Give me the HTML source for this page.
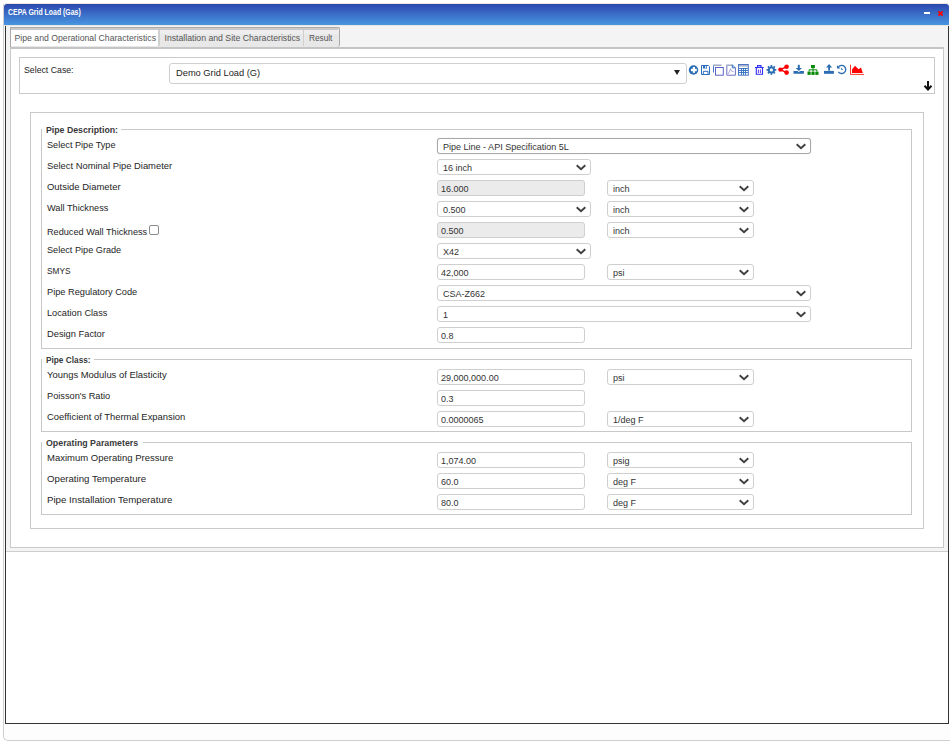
<!DOCTYPE html>
<html><head><meta charset="utf-8"><style>
html,body{margin:0;padding:0;width:952px;height:747px;overflow:hidden;background:#fff;position:relative}
body div{position:absolute;box-sizing:content-box}
.t{white-space:pre;font-family:"Liberation Sans", sans-serif}
</style></head><body>
<div style="left:3px;top:4px;width:946px;height:736px;border-left:1px solid #cfcfcf;border-bottom:1px solid #cfcfcf;border-bottom-left-radius:5px;background:#fdfdfd"></div>
<div style="left:5px;top:3px;width:943px;height:1px;background:#ebe7df"></div>
<div style="left:4px;top:4px;width:945px;height:21px;background:linear-gradient(#2d47ad,#4896e2);border-radius:3px 3px 0 0"></div>
<div class="t" style="left:7.5px;top:8.38px;font-size:9px;line-height:9px;font-weight:bold;color:#fff;transform:scaleX(0.770);transform-origin:0 0;">CEPA Grid Load (Gas)</div>
<div style="left:924px;top:12px;width:6px;height:2px;background:#fff"></div>
<svg style="position:absolute;left:937px;top:10px" width="7" height="7" viewBox="0 0 7 7"><path d="M1.4 1.4L5.6 5.6M5.6 1.4L1.4 5.6" stroke="#f00" stroke-width="1.7"/></svg>
<div style="left:5px;top:26px;width:942px;height:697px;border:1px solid #333;border-top:none;background:#f4f4f4"></div>
<div style="left:6px;top:552px;width:942px;height:171px;background:#fff"></div>
<div style="left:6px;top:551px;width:942px;height:1px;background:#cdcdcd"></div>
<div style="left:4px;top:25px;width:945px;height:1px;background:#e9e6e0"></div>
<div style="left:10px;top:27px;width:328px;height:19px;border:1px solid #a9a9a9;border-bottom:none;border-radius:0 2px 3px 0;background:linear-gradient(#eeeeee 0,#eeeeee 30%,#e8e8e8 30%,#e8e8e8 100%)"></div>
<div style="left:11px;top:28px;width:327px;height:2px;background:#c9c9c9"></div>
<div style="left:11px;top:30px;width:147px;height:16px;background:#fff"></div>
<div style="left:158px;top:30px;width:2px;height:16px;background:#cfcfcf"></div>
<div style="left:303px;top:30px;width:1px;height:16px;background:#cfcfcf"></div>
<div class="t" style="left:14.5px;top:33.64px;font-size:8.7px;line-height:8.7px;font-weight:normal;color:#555;">Pipe and Operational Characteristics</div>
<div class="t" style="left:164.5px;top:33.64px;font-size:8.7px;line-height:8.7px;font-weight:normal;color:#555;">Installation and Site Characteristics</div>
<div class="t" style="left:309px;top:33.64px;font-size:8.7px;line-height:8.7px;font-weight:normal;color:#555;transform:scaleX(0.950);transform-origin:0 0;">Result</div>
<div style="left:10px;top:47px;width:932px;height:499px;border:1px solid #c9c9c9;background:#fff"></div>
<div style="left:11px;top:47px;width:932px;height:2px;background:#c4c4c4"></div>
<div style="left:19px;top:57px;width:914px;height:35px;border:1px solid #cacaca"></div>
<div class="t" style="left:23.5px;top:65.46px;font-size:9.5px;line-height:9.5px;font-weight:normal;color:#252525;transform:scaleX(0.920);transform-origin:0 0;">Select Case:</div>
<div style="left:169px;top:63px;width:516px;height:19px;border:1px solid #cfcfcf;border-radius:3px;background:#fff"></div>
<div class="t" style="left:175.5px;top:67.96px;font-size:9.5px;line-height:9.5px;font-weight:normal;color:#252525;transform:scaleX(0.978);transform-origin:0 0;">Demo Grid Load (G)</div>
<svg style="position:absolute;left:674px;top:70px" width="7" height="5" viewBox="0 0 7 5"><path d="M0 0H6L3 5Z" fill="#222"/></svg>
<svg style="position:absolute;left:923px;top:81px" width="10" height="10" viewBox="0 0 10 10"><path d="M5 0V8M1.5 4.8L5 8.5L8.5 4.8" stroke="#111" stroke-width="2" fill="none"/></svg>
<div style="left:30px;top:112px;width:892px;height:415px;border:1px solid #cacaca"></div>
<div style="left:41px;top:129px;width:869px;height:219px;border:1px solid #c8c8c8;border-top:none"></div>
<div style="left:121px;top:129px;width:790px;height:1px;background:#c8c8c8"></div>
<div class="t" style="left:45.5px;top:125.80px;font-size:8.5px;line-height:8.5px;font-weight:bold;color:#3a3a3a;transform:scaleX(1.030);transform-origin:0 0;">Pipe Description:</div>
<div style="left:41px;top:359px;width:869px;height:72px;border:1px solid #c8c8c8;border-top:none"></div>
<div style="left:94px;top:359px;width:817px;height:1px;background:#c8c8c8"></div>
<div class="t" style="left:45.5px;top:355.80px;font-size:8.5px;line-height:8.5px;font-weight:bold;color:#3a3a3a;transform:scaleX(0.973);transform-origin:0 0;">Pipe Class:</div>
<div style="left:41px;top:442px;width:869px;height:72px;border:1px solid #c8c8c8;border-top:none"></div>
<div style="left:143px;top:442px;width:768px;height:1px;background:#c8c8c8"></div>
<div class="t" style="left:45.5px;top:438.80px;font-size:8.5px;line-height:8.5px;font-weight:bold;color:#3a3a3a;transform:scaleX(1.038);transform-origin:0 0;">Operating Parameters</div>
<div class="t" style="left:47px;top:139.96px;font-size:9.5px;line-height:9.5px;font-weight:normal;color:#252525;transform:scaleX(0.963);transform-origin:0 0;">Select Pipe Type</div>
<div style="left:437px;top:138px;width:372px;height:14px;border:1px solid #a8a8a8;border-radius:3px;background:#fff;box-shadow:0 0 1px rgba(0,0,0,.25);"><div class="t" style="left:5px;top:2.87px;font-size:9.6px;line-height:9.6px;color:#333;transform:scaleX(.94);transform-origin:0 0">Pipe Line - API Specification 5L</div><svg style="position:absolute;right:4px;top:4px" width="10" height="7" viewBox="0 0 10 7"><path d="M0.7 1.2L5 5.3L9.3 1.2" stroke="#404040" stroke-width="1.9" fill="none"/></svg></div>
<div class="t" style="left:47px;top:161.46px;font-size:9.5px;line-height:9.5px;font-weight:normal;color:#252525;transform:scaleX(0.987);transform-origin:0 0;">Select Nominal Pipe Diameter</div>
<div style="left:437px;top:159px;width:152px;height:14px;border:1px solid #cfcfcf;border-radius:3px;background:#fff;"><div class="t" style="left:5px;top:2.87px;font-size:9.6px;line-height:9.6px;color:#333;transform:scaleX(.94);transform-origin:0 0">16 inch</div><svg style="position:absolute;right:4px;top:4px" width="10" height="7" viewBox="0 0 10 7"><path d="M0.7 1.2L5 5.3L9.3 1.2" stroke="#404040" stroke-width="1.9" fill="none"/></svg></div>
<div class="t" style="left:47px;top:182.46px;font-size:9.5px;line-height:9.5px;font-weight:normal;color:#252525;transform:scaleX(0.995);transform-origin:0 0;">Outside Diameter</div>
<div style="left:437px;top:180px;width:146px;height:14px;border:1px solid #cfcfcf;border-radius:3px;background:#ebebeb"><div class="t" style="left:3px;top:2.87px;font-size:9.6px;line-height:9.6px;color:#333;transform:scaleX(.94);transform-origin:0 0">16.000</div></div>
<div style="left:607px;top:180px;width:145px;height:14px;border:1px solid #cfcfcf;border-radius:3px;background:#fff;"><div class="t" style="left:5px;top:2.87px;font-size:9.6px;line-height:9.6px;color:#333;transform:scaleX(.94);transform-origin:0 0">inch</div><svg style="position:absolute;right:4px;top:4px" width="10" height="7" viewBox="0 0 10 7"><path d="M0.7 1.2L5 5.3L9.3 1.2" stroke="#404040" stroke-width="1.9" fill="none"/></svg></div>
<div class="t" style="left:47px;top:202.96px;font-size:9.5px;line-height:9.5px;font-weight:normal;color:#252525;transform:scaleX(0.968);transform-origin:0 0;">Wall Thickness</div>
<div style="left:437px;top:201px;width:152px;height:14px;border:1px solid #cfcfcf;border-radius:3px;background:#fff;"><div class="t" style="left:5px;top:2.87px;font-size:9.6px;line-height:9.6px;color:#333;transform:scaleX(.94);transform-origin:0 0">0.500</div><svg style="position:absolute;right:4px;top:4px" width="10" height="7" viewBox="0 0 10 7"><path d="M0.7 1.2L5 5.3L9.3 1.2" stroke="#404040" stroke-width="1.9" fill="none"/></svg></div>
<div style="left:607px;top:201px;width:145px;height:14px;border:1px solid #cfcfcf;border-radius:3px;background:#fff;"><div class="t" style="left:5px;top:2.87px;font-size:9.6px;line-height:9.6px;color:#333;transform:scaleX(.94);transform-origin:0 0">inch</div><svg style="position:absolute;right:4px;top:4px" width="10" height="7" viewBox="0 0 10 7"><path d="M0.7 1.2L5 5.3L9.3 1.2" stroke="#404040" stroke-width="1.9" fill="none"/></svg></div>
<div class="t" style="left:47px;top:226.96px;font-size:9.5px;line-height:9.5px;font-weight:normal;color:#252525;transform:scaleX(0.963);transform-origin:0 0;">Reduced Wall Thickness</div>
<div style="left:437px;top:222px;width:146px;height:14px;border:1px solid #cfcfcf;border-radius:3px;background:#ebebeb"><div class="t" style="left:3px;top:2.87px;font-size:9.6px;line-height:9.6px;color:#333;transform:scaleX(.94);transform-origin:0 0">0.500</div></div>
<div style="left:607px;top:222px;width:145px;height:14px;border:1px solid #cfcfcf;border-radius:3px;background:#fff;"><div class="t" style="left:5px;top:2.87px;font-size:9.6px;line-height:9.6px;color:#333;transform:scaleX(.94);transform-origin:0 0">inch</div><svg style="position:absolute;right:4px;top:4px" width="10" height="7" viewBox="0 0 10 7"><path d="M0.7 1.2L5 5.3L9.3 1.2" stroke="#404040" stroke-width="1.9" fill="none"/></svg></div>
<div class="t" style="left:47px;top:244.96px;font-size:9.5px;line-height:9.5px;font-weight:normal;color:#252525;transform:scaleX(0.962);transform-origin:0 0;">Select Pipe Grade</div>
<div style="left:437px;top:243px;width:152px;height:14px;border:1px solid #cfcfcf;border-radius:3px;background:#fff;"><div class="t" style="left:5px;top:2.87px;font-size:9.6px;line-height:9.6px;color:#333;transform:scaleX(.94);transform-origin:0 0">X42</div><svg style="position:absolute;right:4px;top:4px" width="10" height="7" viewBox="0 0 10 7"><path d="M0.7 1.2L5 5.3L9.3 1.2" stroke="#404040" stroke-width="1.9" fill="none"/></svg></div>
<div class="t" style="left:47px;top:265.96px;font-size:9.5px;line-height:9.5px;font-weight:normal;color:#252525;transform:scaleX(0.869);transform-origin:0 0;">SMYS</div>
<div style="left:437px;top:264px;width:146px;height:14px;border:1px solid #cfcfcf;border-radius:3px;background:#fff"><div class="t" style="left:3px;top:2.87px;font-size:9.6px;line-height:9.6px;color:#333;transform:scaleX(.94);transform-origin:0 0">42,000</div></div>
<div style="left:607px;top:264px;width:145px;height:14px;border:1px solid #cfcfcf;border-radius:3px;background:#fff;"><div class="t" style="left:5px;top:2.87px;font-size:9.6px;line-height:9.6px;color:#333;transform:scaleX(.94);transform-origin:0 0">psi</div><svg style="position:absolute;right:4px;top:4px" width="10" height="7" viewBox="0 0 10 7"><path d="M0.7 1.2L5 5.3L9.3 1.2" stroke="#404040" stroke-width="1.9" fill="none"/></svg></div>
<div class="t" style="left:47px;top:286.96px;font-size:9.5px;line-height:9.5px;font-weight:normal;color:#252525;transform:scaleX(0.971);transform-origin:0 0;">Pipe Regulatory Code</div>
<div style="left:437px;top:285px;width:372px;height:14px;border:1px solid #cfcfcf;border-radius:3px;background:#fff;"><div class="t" style="left:5px;top:2.87px;font-size:9.6px;line-height:9.6px;color:#333;transform:scaleX(.94);transform-origin:0 0">CSA-Z662</div><svg style="position:absolute;right:4px;top:4px" width="10" height="7" viewBox="0 0 10 7"><path d="M0.7 1.2L5 5.3L9.3 1.2" stroke="#404040" stroke-width="1.9" fill="none"/></svg></div>
<div class="t" style="left:47px;top:307.96px;font-size:9.5px;line-height:9.5px;font-weight:normal;color:#252525;transform:scaleX(0.970);transform-origin:0 0;">Location Class</div>
<div style="left:437px;top:306px;width:372px;height:14px;border:1px solid #cfcfcf;border-radius:3px;background:#fff;"><div class="t" style="left:5px;top:2.87px;font-size:9.6px;line-height:9.6px;color:#333;transform:scaleX(.94);transform-origin:0 0">1</div><svg style="position:absolute;right:4px;top:4px" width="10" height="7" viewBox="0 0 10 7"><path d="M0.7 1.2L5 5.3L9.3 1.2" stroke="#404040" stroke-width="1.9" fill="none"/></svg></div>
<div class="t" style="left:47px;top:328.96px;font-size:9.5px;line-height:9.5px;font-weight:normal;color:#252525;transform:scaleX(0.979);transform-origin:0 0;">Design Factor</div>
<div style="left:437px;top:327px;width:146px;height:14px;border:1px solid #cfcfcf;border-radius:3px;background:#fff"><div class="t" style="left:3px;top:2.87px;font-size:9.6px;line-height:9.6px;color:#333;transform:scaleX(.94);transform-origin:0 0">0.8</div></div>
<div class="t" style="left:47px;top:369.96px;font-size:9.5px;line-height:9.5px;font-weight:normal;color:#252525;transform:scaleX(0.992);transform-origin:0 0;">Youngs Modulus of Elasticity</div>
<div style="left:437px;top:369px;width:146px;height:14px;border:1px solid #cfcfcf;border-radius:3px;background:#fff"><div class="t" style="left:3px;top:2.87px;font-size:9.6px;line-height:9.6px;color:#333;transform:scaleX(.94);transform-origin:0 0">29,000,000.00</div></div>
<div style="left:607px;top:369px;width:145px;height:14px;border:1px solid #cfcfcf;border-radius:3px;background:#fff;"><div class="t" style="left:5px;top:2.87px;font-size:9.6px;line-height:9.6px;color:#333;transform:scaleX(.94);transform-origin:0 0">psi</div><svg style="position:absolute;right:4px;top:4px" width="10" height="7" viewBox="0 0 10 7"><path d="M0.7 1.2L5 5.3L9.3 1.2" stroke="#404040" stroke-width="1.9" fill="none"/></svg></div>
<div class="t" style="left:47px;top:390.96px;font-size:9.5px;line-height:9.5px;font-weight:normal;color:#252525;transform:scaleX(0.970);transform-origin:0 0;">Poisson's Ratio</div>
<div style="left:437px;top:390px;width:146px;height:14px;border:1px solid #cfcfcf;border-radius:3px;background:#fff"><div class="t" style="left:3px;top:2.87px;font-size:9.6px;line-height:9.6px;color:#333;transform:scaleX(.94);transform-origin:0 0">0.3</div></div>
<div class="t" style="left:47px;top:411.96px;font-size:9.5px;line-height:9.5px;font-weight:normal;color:#252525;transform:scaleX(0.991);transform-origin:0 0;">Coefficient of Thermal Expansion</div>
<div style="left:437px;top:411px;width:146px;height:14px;border:1px solid #cfcfcf;border-radius:3px;background:#fff"><div class="t" style="left:3px;top:2.87px;font-size:9.6px;line-height:9.6px;color:#333;transform:scaleX(.94);transform-origin:0 0">0.0000065</div></div>
<div style="left:607px;top:411px;width:145px;height:14px;border:1px solid #cfcfcf;border-radius:3px;background:#fff;"><div class="t" style="left:5px;top:2.87px;font-size:9.6px;line-height:9.6px;color:#333;transform:scaleX(.94);transform-origin:0 0">1/deg F</div><svg style="position:absolute;right:4px;top:4px" width="10" height="7" viewBox="0 0 10 7"><path d="M0.7 1.2L5 5.3L9.3 1.2" stroke="#404040" stroke-width="1.9" fill="none"/></svg></div>
<div class="t" style="left:47px;top:452.96px;font-size:9.5px;line-height:9.5px;font-weight:normal;color:#252525;">Maximum Operating Pressure</div>
<div style="left:437px;top:452px;width:146px;height:14px;border:1px solid #cfcfcf;border-radius:3px;background:#fff"><div class="t" style="left:3px;top:2.87px;font-size:9.6px;line-height:9.6px;color:#333;transform:scaleX(.94);transform-origin:0 0">1,074.00</div></div>
<div style="left:607px;top:452px;width:145px;height:14px;border:1px solid #cfcfcf;border-radius:3px;background:#fff;"><div class="t" style="left:5px;top:2.87px;font-size:9.6px;line-height:9.6px;color:#333;transform:scaleX(.94);transform-origin:0 0">psig</div><svg style="position:absolute;right:4px;top:4px" width="10" height="7" viewBox="0 0 10 7"><path d="M0.7 1.2L5 5.3L9.3 1.2" stroke="#404040" stroke-width="1.9" fill="none"/></svg></div>
<div class="t" style="left:47px;top:473.96px;font-size:9.5px;line-height:9.5px;font-weight:normal;color:#252525;transform:scaleX(1.016);transform-origin:0 0;">Operating Temperature</div>
<div style="left:437px;top:473px;width:146px;height:14px;border:1px solid #cfcfcf;border-radius:3px;background:#fff"><div class="t" style="left:3px;top:2.87px;font-size:9.6px;line-height:9.6px;color:#333;transform:scaleX(.94);transform-origin:0 0">60.0</div></div>
<div style="left:607px;top:473px;width:145px;height:14px;border:1px solid #cfcfcf;border-radius:3px;background:#fff;"><div class="t" style="left:5px;top:2.87px;font-size:9.6px;line-height:9.6px;color:#333;transform:scaleX(.94);transform-origin:0 0">deg F</div><svg style="position:absolute;right:4px;top:4px" width="10" height="7" viewBox="0 0 10 7"><path d="M0.7 1.2L5 5.3L9.3 1.2" stroke="#404040" stroke-width="1.9" fill="none"/></svg></div>
<div class="t" style="left:47px;top:494.96px;font-size:9.5px;line-height:9.5px;font-weight:normal;color:#252525;transform:scaleX(1.021);transform-origin:0 0;">Pipe Installation Temperature</div>
<div style="left:437px;top:494px;width:146px;height:14px;border:1px solid #cfcfcf;border-radius:3px;background:#fff"><div class="t" style="left:3px;top:2.87px;font-size:9.6px;line-height:9.6px;color:#333;transform:scaleX(.94);transform-origin:0 0">80.0</div></div>
<div style="left:607px;top:494px;width:145px;height:14px;border:1px solid #cfcfcf;border-radius:3px;background:#fff;"><div class="t" style="left:5px;top:2.87px;font-size:9.6px;line-height:9.6px;color:#333;transform:scaleX(.94);transform-origin:0 0">deg F</div><svg style="position:absolute;right:4px;top:4px" width="10" height="7" viewBox="0 0 10 7"><path d="M0.7 1.2L5 5.3L9.3 1.2" stroke="#404040" stroke-width="1.9" fill="none"/></svg></div>
<div style="left:149px;top:225px;width:8px;height:8px;border:1px solid #8a8a8a;border-radius:2px;background:#fff"></div>
<svg style="position:absolute;left:686px;top:62px" width="180" height="16" viewBox="0 0 180 16">
<g fill="#2b6cb3"><circle cx="7.5" cy="8" r="4.75"/></g>
<rect x="4.9" y="6.8" width="5.9" height="2.4" fill="#fff"/><rect x="6.8" y="5" width="2.2" height="5.8" fill="#fff"/>
<g fill="none" stroke="#2f6fc0" stroke-width="1">
<path d="M15.5 3.5H22.3L23.5 4.7V12.5H15.5Z"/>
<path d="M17.3 12.5V9.3H22V12.5"/>
<path d="M27.5 10.5V3" stroke="#4a78c8"/><path d="M27 3.2H35.5" stroke="#a8b0c8" stroke-width="1.6"/>
<rect x="29.5" y="5.5" width="7.8" height="7.7" stroke="#5a64c8"/>
<path d="M40.8 3V13.2H49.4V5.6" stroke="#6a70c0"/><path d="M40.3 3.2H46.5" stroke="#a8b0c8" stroke-width="1.6"/><path d="M46.5 3L49.4 5.8" stroke="#4a78c8"/>
<path d="M46.3 2.9V5.8H49.2"/>
<path d="M42.3 11.8L44.6 6.8L45.6 9.2L47.6 9.6" stroke-width="0.7" stroke="#8a80c8"/>
<rect x="52.5" y="2.5" width="9.8" height="10.7" stroke="#4a78c8"/>
<path d="M53 6.5H62M53 8.5H62M53 10.5H62M55.5 6V13M57.5 6V13M59.5 6V13" stroke-width="0.9"/>
</g>
<rect x="17" y="3.5" width="4" height="3" fill="#2f6fc0"/><rect x="19.2" y="4" width="1" height="2" fill="#fff"/>
<rect x="53" y="3" width="9" height="1.6" fill="#aab0c8"/>
<g fill="none" stroke="#2c2cf5" stroke-width="1.1">
<path d="M69 5.5H77.7"/><path d="M71.6 5.3V3.6H75V5.3"/><path d="M70.3 6V12.3H76.5V6"/><path d="M72.4 7.5V11M74.4 7.5V11" stroke="#7a4af0"/>
</g>
<g fill="#2b6cb3" transform="translate(85.4 7.9)">
<circle r="3.5"/>
<g id="tooth"><rect x="-0.85" y="-4.9" width="1.7" height="9.8"/></g>
<rect x="-0.85" y="-4.9" width="1.7" height="9.8" transform="rotate(45)"/>
<rect x="-0.85" y="-4.9" width="1.7" height="9.8" transform="rotate(90)"/>
<rect x="-0.85" y="-4.9" width="1.7" height="9.8" transform="rotate(135)"/>
<circle r="1.6" fill="#fff"/>
</g>
<g fill="#f00"><circle cx="94.4" cy="7.6" r="2.2"/><circle cx="100.6" cy="4.7" r="2.3"/><circle cx="100.6" cy="10.6" r="2.3"/></g>
<path d="M94.4 7.6L100.6 4.7M94.4 7.6L100.6 10.6" stroke="#f00" stroke-width="1.6"/>
<g fill="#2b6cb3">
<rect x="111.8" y="2.8" width="2" height="4.5"/><path d="M109.6 6H116L112.8 9Z"/>
<path d="M107.5 9.1H111.6L112.8 10.2L114 9.1H117.9V11.8H107.5Z"/>
<path d="M140.1 5.6H146.1L143.1 2.1Z"/><rect x="142.2" y="5" width="1.8" height="3.6"/>
<rect x="138" y="8.9" width="9.9" height="2.9"/>
<path d="M151 3.2V6.6H154.4Z"/>
</g>
<g fill="#088a08">
<rect x="125" y="3" width="3.9" height="3"/><rect x="121.5" y="9.7" width="3.2" height="3.2"/><rect x="125.4" y="9.7" width="3.2" height="3.2"/><rect x="129.3" y="9.7" width="3.2" height="3.2"/>
</g>
<path d="M127 6V9.7M123.1 9.7V7.8H130.9V9.7" fill="none" stroke="#088a08" stroke-width="1"/>
<path d="M152.4 4.9A4.1 4.1 0 1 1 152.3 9.8" fill="none" stroke="#2b6cb3" stroke-width="1.3"/>
<path d="M155.6 5.8V7.6H157" fill="none" stroke="#2b6cb3" stroke-width="0.8"/>
<path d="M164.5 2.7V12.4H177.9" fill="none" stroke="#ff3a2a" stroke-width="1"/>
<path d="M166 11V7.5L169 3.8L172.5 7.3L175 5.5L176.8 11Z" fill="#f00"/>
</svg>

</body></html>
